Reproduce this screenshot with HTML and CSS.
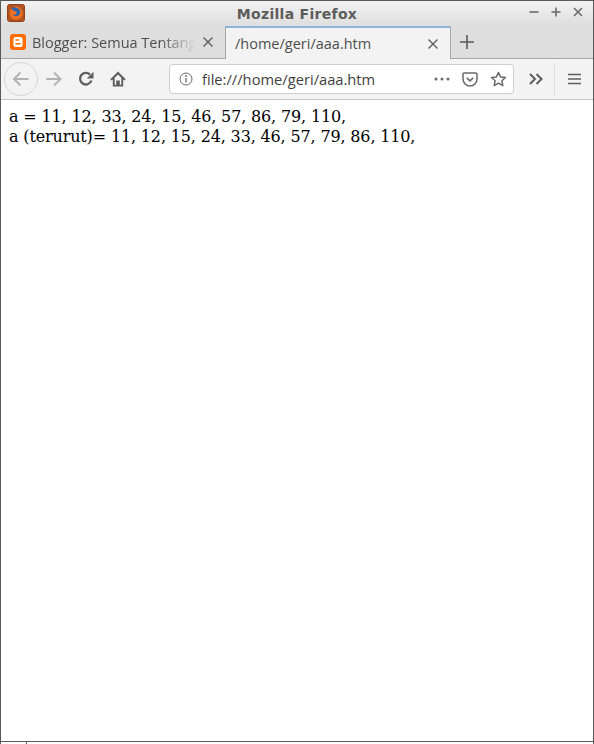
FILE: index.html
```html
<!DOCTYPE html>
<html lang="id">
<head>
    <meta charset="UTF-8">
    <meta name="viewport" content="width=device-width, initial-scale=1.0">
    <title>Mozilla Firefox</title>
    <link rel="stylesheet" href="styles.css">
</head>
<body>
    <div class="window">
        <header class="titlebar">
            <svg class="app-icon" width="18" height="18" viewBox="0 0 18 18">
                <rect x="0.5" y="0.5" width="17" height="17" rx="2" fill="#b5531f" stroke="#96401c"/>
                <circle cx="9.5" cy="8.500" r="6" fill="#2f64ab"/>
                <path d="M7 3 C10 1.500 15 3.500 15.600 8.500 C16 13 12 16 8.500 15.600 C5 15.200 3 13 2.800 9.500 C3 7 3.600 5.500 5 4.500 C5 6 6 6.800 7.500 7 C9 7.200 10 8.200 9.500 9.500 C8.800 11 6.500 11 5.500 10 C6.500 12.500 10.500 13 12.500 10.500 C14 8.500 13 5.500 11 4.500 C9.800 3.800 8.400 3.400 7 3 Z" fill="#f0701f"/>
            </svg>
            <span class="title">Mozilla Firefox</span>
            <div class="window-controls">
                <svg width="12" height="12" viewBox="0 0 12 12"><path d="M1.500 6h9" stroke="#6b6b6b" stroke-width="1.600"/></svg>
                <svg width="12" height="12" viewBox="0 0 12 12"><path d="M1.500 6h9M6 1.500v9" stroke="#6b6b6b" stroke-width="1.600"/></svg>
                <svg width="12" height="12" viewBox="0 0 12 12"><path d="M2 2l8 8M10 2l-8 8" stroke="#6b6b6b" stroke-width="1.600"/></svg>
            </div>
        </header>

        <nav class="tabs">
            <div class="tab">
                <svg class="favicon" width="16" height="16" viewBox="0 0 16 16">
                    <rect width="16" height="16" rx="3" fill="#ff6d00"/>
                    <rect x="3.400" y="3" width="9.200" height="10" rx="2.600" fill="#fff"/>
                    <path d="M6 6h2.400M6 9.800h4" stroke="#ff6d00" stroke-width="1.500" stroke-linecap="round"/>
                </svg>
                <span class="tab-label faded">Blogger: Semua Tentang</span>
                <svg class="tab-close" width="12" height="12" viewBox="0 0 12 12"><path d="M1.500 1.500l9 9M10.500 1.500l-9 9" stroke="#5c5c5c" stroke-width="1.400"/></svg>
            </div>
            <div class="tab active">
                <span class="tab-label">/home/geri/aaa.htm</span>
                <svg class="tab-close" width="12" height="12" viewBox="0 0 12 12"><path d="M1.500 1.500l9 9M10.500 1.500l-9 9" stroke="#5c5c5c" stroke-width="1.400"/></svg>
            </div>
            <svg class="new-tab" width="14" height="14" viewBox="0 0 14 14"><path d="M0 7h14M7 0v14" stroke="#5a5a5a" stroke-width="1.600"/></svg>
        </nav>

        <div class="toolbar">
            <div class="back-button">
                <svg width="18" height="16" viewBox="0 0 18 16"><path d="M16.500 8H2M8.500 1.500L2 8l6.500 6.500" fill="none" stroke="#b3b3b3" stroke-width="2"/></svg>
            </div>
            <svg class="nav-icon forward" width="18" height="16" viewBox="0 0 18 16"><path d="M1 8h14.500M9 1.500L15.500 8 9 14.500" fill="none" stroke="#b3b3b3" stroke-width="2"/></svg>
            <svg class="nav-icon reload" width="16" height="16" viewBox="0 0 16 16"><path d="M13.400 9.500A5.800 5.800 0 1 1 12 3.600" fill="none" stroke="#5e5e5e" stroke-width="2.300"/><path d="M15.500 .8v6.800H8.700z" fill="#5e5e5e"/></svg>
            <svg class="nav-icon home" width="16" height="16" viewBox="0 0 16 16"><path fill-rule="evenodd" d="M8 .6L.3 8.300l1.300 1.300L2.800 8.400v7.200h10.400V8.400l1.200 1.200 1.300-1.300zM8 3.600l3.300 3.200v7H9.800V9.400H6.200v4.400H4.700v-7z" fill="#5e5e5e"/></svg>
            <div class="urlbar">
                <svg class="info" width="14" height="14" viewBox="0 0 14 14"><circle cx="7" cy="7" r="6" fill="none" stroke="#6a6a6a"/><path d="M7 6v4.500" stroke="#6a6a6a" stroke-width="1.300"/><circle cx="7" cy="4" r="0.900" fill="#6a6a6a"/></svg>
                <span class="url">file:///home/geri/aaa.htm</span>
                <svg class="dots" width="16" height="4" viewBox="0 0 16 4"><circle cx="2" cy="2" r="1.500" fill="#6a6a6a"/><circle cx="8" cy="2" r="1.500" fill="#6a6a6a"/><circle cx="14" cy="2" r="1.500" fill="#6a6a6a"/></svg>
                <svg class="pocket" width="16" height="15" viewBox="0 0 16 15"><path d="M1 2.200C1 1.500 1.500 1 2.200 1h11.600c.7 0 1.200.5 1.200 1.200V7A7 7 0 0 1 1 7z" fill="none" stroke="#6a6a6a" stroke-width="1.500"/><path d="M4.800 5.800L8 8.800l3.200-3" fill="none" stroke="#6a6a6a" stroke-width="1.600"/></svg>
                <svg class="star" width="17" height="16" viewBox="0 0 17 16"><path d="M8.500 1.500l2.100 4.400 4.900.6-3.600 3.300.9 4.800-4.300-2.400-4.300 2.400.9-4.800-3.600-3.300 4.900-.6z" fill="none" stroke="#6a6a6a" stroke-width="1.500" stroke-linejoin="round"/></svg>
            </div>
            <svg class="overflow" width="14" height="12" viewBox="0 0 14 12"><path d="M1 1l5 5-5 5M7.500 1l5 5-5 5" fill="none" stroke="#5e5e5e" stroke-width="2"/></svg>
            <div class="separator"></div>
            <svg class="menu" width="13" height="12" viewBox="0 0 13 12"><path d="M0 1.500h13M0 6h13M0 10.500h13" stroke="#5e5e5e" stroke-width="1.700"/></svg>
        </div>

        <main class="content">
            a = 11, 12, 33, 24, 15, 46, 57, 86, 79, 110, <br>
            a (terurut)= 11, 12, 15, 24, 33, 46, 57, 79, 86, 110,
        </main>

        <footer class="bottom-edge">
            <div class="tick"></div>
        </footer>
    </div>
</body>
</html>
```

FILE: styles.css
```css
html, body {
    margin: 0;
    padding: 0;
    height: 100%;
    background: #fff;
    overflow: hidden;
}

.window {
    display: flex;
    flex-direction: column;
    height: 744px;
    box-sizing: border-box;
    border-left: 1px solid #5a5a5a;
    border-right: 1px solid #5a5a5a;
    border-top: 1px solid #5a5a5a;
}

.titlebar {
    position: relative;
    display: flex;
    align-items: center;
    justify-content: center;
    height: 25px;
    flex: none;
    background: linear-gradient(#f2f2f2, #dedede);
}

.app-icon {
    position: absolute;
    left: 6px;
    top: 3px;
}

.title {
    font-family: "DejaVu Sans", sans-serif;
    font-weight: bold;
    font-size: 14px;
    letter-spacing: 0.3px;
    color: #5c5c5c;
}

.window-controls {
    position: absolute;
    right: 9px;
    top: 5px;
    display: flex;
    gap: 10px;
}

.tabs {
    display: flex;
    align-items: stretch;
    height: 33px;
    flex: none;
    background: #dedede;
    border-bottom: 1px solid #a6a6a6;
    box-sizing: border-box;
    font-family: "Open Sans", sans-serif;
    font-size: 14.5px;
    color: #4f4f4f;
}

.tab {
    display: flex;
    align-items: center;
    box-sizing: border-box;
    width: 224px;
    padding: 0 11px 0 9px;
}

.tab.active {
    width: 226px;
    height: 33px;
    padding-left: 9px;
    padding-right: 11px;
    background: #f3f3f3;
    border-top: 2px solid #8fb4d8;
    border-left: 1px solid #a6a6a6;
    border-right: 1px solid #a6a6a6;
}

.favicon {
    flex: none;
    margin-right: 6px;
}

.tab-label {
    flex: 1;
    white-space: nowrap;
}

.tab-label.faded {
    -webkit-mask-image: linear-gradient(to right, #000 78%, transparent 100%);
    mask-image: linear-gradient(to right, #000 78%, transparent 100%);
}

.tab-close {
    flex: none;
    margin-left: 6px;
}

.new-tab {
    align-self: center;
    margin-left: 9px;
}

.toolbar {
    display: flex;
    align-items: center;
    height: 41px;
    flex: none;
    box-sizing: border-box;
    background: #f3f3f3;
    border-bottom: 1px solid #c4c4c4;
    padding-left: 3px;
}

.back-button {
    display: flex;
    align-items: center;
    justify-content: center;
    box-sizing: border-box;
    width: 34px;
    height: 34px;
    border: 1px solid #d6d6d6;
    border-radius: 50%;
}

.forward {
    margin-left: 7px;
}

.reload {
    margin-left: 15px;
}

.home {
    margin-left: 16px;
}

.urlbar {
    display: flex;
    align-items: center;
    box-sizing: border-box;
    width: 345px;
    height: 30px;
    margin-left: 43px;
    padding: 0 6px 0 9px;
    background: #fff;
    border: 1px solid #cfcfcf;
    border-radius: 4px;
    font-family: "Open Sans", sans-serif;
    font-size: 14.7px;
    color: #3f3f3f;
}

.url {
    flex: 1;
    margin-left: 9px;
}

.pocket {
    margin-left: 12px;
}

.star {
    margin-left: 12px;
}

.overflow {
    margin-left: 15px;
}

.separator {
    width: 1px;
    height: 33px;
    margin-left: 11px;
    background: #dcdcdc;
}

.menu {
    margin-left: 13px;
}

.content {
    flex: 1;
    padding: 7px 8px;
    font-family: "DejaVu Serif", serif;
    font-size: 16px;
    letter-spacing: -0.15px;
    line-height: 20px;
    color: #000;
    background: #fff;
}

.bottom-edge {
    position: relative;
    height: 3px;
    flex: none;
    box-sizing: border-box;
    background: #fff;
    border-top: 1px solid #5a5a5a;
}

.tick {
    position: absolute;
    left: 25px;
    top: 0;
    width: 1px;
    height: 2px;
    background: #5a5a5a;
}
```
